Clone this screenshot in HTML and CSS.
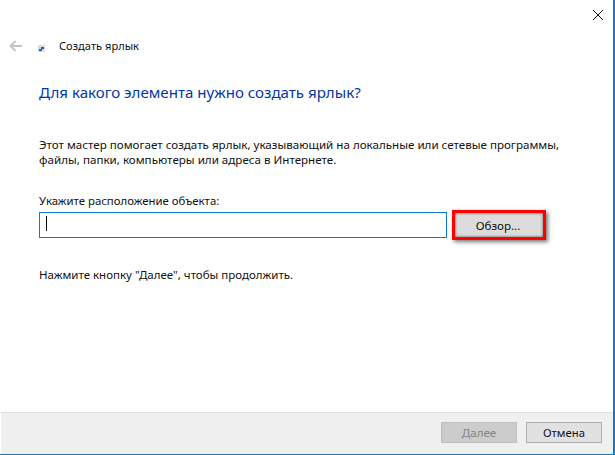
FILE: index.html
```html
<!DOCTYPE html>
<html lang="ru">
<head>
<meta charset="utf-8">
<title>Создать ярлык</title>
<link rel="stylesheet" href="styles.css">
</head>
<body>
<div class="window">
  <div class="titlebar">
    <svg class="close" width="10" height="10" viewBox="0 0 10 10"><path d="M0 0L10 10M10 0L0 10" stroke="#111" stroke-width="1" fill="none"/></svg>
  </div>
  <div class="header">
    <svg class="back" width="14" height="12" viewBox="0 0 14 12"><path d="M13 6H2M6.5 1L1.5 6l5 5" stroke="#c4c4c4" stroke-width="1.8" fill="none"/></svg>
    <svg class="shortcut" width="7" height="7" viewBox="0 0 7 7"><rect width="7" height="7" fill="#dcdde2"/><path d="M1 6V4h2V2h3v2H4v2z" fill="#1f5fb8"/></svg>
    <span class="wizard-title">Создать ярлык</span>
  </div>
  <main class="content">
    <h1 class="heading">Для какого элемента нужно создать ярлык?</h1>
    <p class="intro">Этот мастер помогает создать ярлык, указывающий на локальные или сетевые программы, файлы, папки, компьютеры или адреса в Интернете.</p>
    <label class="field-label" for="loc">Укажите расположение объекта:</label>
    <div class="field-row">
      <div class="input" id="loc"><span class="caret"></span></div>
      <div class="browse">Обзор...</div>
    </div>
    <p class="hint">Нажмите кнопку "Далее", чтобы продолжить.</p>
  </main>
  <footer class="footer">
    <div class="btn btn-disabled">Далее</div>
    <div class="btn btn-cancel">Отмена</div>
  </footer>
</div>
</body>
</html>
```
FILE: styles.css
```css
* { box-sizing: border-box; }
html, body { margin: 0; height: 100%; background: #fff; overflow: hidden; }
body { font-family: "Noto Sans", "Open Sans", sans-serif; font-size: 11.6px; color: #111; }
.window {
  width: 615px; height: 455px;
  display: flex; flex-direction: column;
  padding-left: 1px;
  border-right: 2px solid #0f78d0;
  border-bottom: 1px solid #1278b8;
  background: #fff;
}
.titlebar { height: 13px; display: flex; justify-content: flex-end; padding: 10px 10px 0 0; flex: none; }
.close { flex: none; }
.header { height: 51px; display: flex; align-items: center; flex: none; padding: 14px 0 0 8px; }
.back { flex: none; }
.shortcut { flex: none; margin: 5px 0 0 15px; }
.wizard-title { margin-left: 14px; line-height: 16px; font-size: 11.1px; }
.content { flex: 1; padding: 17px 0 0 38px; }
.heading { margin: 0; font-size: 15.1px; font-weight: 400; color: #0038a8; line-height: 22px; }
.intro { margin: 34px 0 0; width: 540px; line-height: 15px; }
.field-label { display: block; margin-top: 26px; line-height: 15px; font-size: 11.4px; }
.field-row { display: flex; align-items: center; margin-top: 2px; }
.input { width: 408px; height: 26px; border: 1px solid #0f78d0; background: #fff; padding: 3px 0 0 6px; }
.caret { display: block; width: 1px; height: 15px; background: #000; }
.browse {
  width: 94px; height: 30px; margin-left: 5px;
  border: 3px solid #f00;
  background: #dcdcdc;
  box-shadow: inset 0 0 3px #555, 2px 2px 4px #777;
  display: flex; align-items: center; justify-content: center;
  padding-right: 2px;
}
.hint { margin: 27px 0 0; line-height: 15px; font-size: 11.5px; }
.footer {
  flex: none; height: 42px;
  background: #f0f0f0; border-top: 1px solid #dfdfdf;
  display: flex; justify-content: flex-end; align-items: flex-start; gap: 9px;
  padding: 9px 11px 0 0;
}
.btn {
  width: 76px; height: 21px;
  border: 1px solid #adadad; background: #e1e1e1;
  display: flex; align-items: center; justify-content: center;
}
.btn-disabled { background: #ccc; border-color: #bfbfbf; color: #838383; }
.btn-cancel { font-size: 11.3px; }
```
